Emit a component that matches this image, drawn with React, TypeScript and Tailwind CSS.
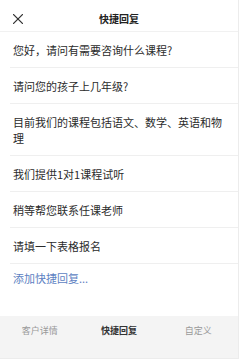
import React from "react";

const items: string[] = [
  "您好，请问有需要咨询什么课程?",
  "请问您的孩子上几年级?",
  "目前我们的课程包括语文、数学、英语和物理",
  "我们提供1对1课程试听",
  "稍等帮您联系任课老师",
  "请填一下表格报名",
];

export default function App() {
  return (
    <div
      className="w-[240px] h-[360px] bg-white overflow-hidden"
      style={{ fontFamily: '"Noto Sans CJK SC", "Noto Sans", sans-serif' }}
    >
      <div className="w-[239px] h-[359px] flex flex-col border-r border-b border-[#ececec]">
        <div className="h-[32px] shrink-0 grid grid-cols-[1fr_auto_1fr] items-center pt-[6px] border-b border-[#f1f1f1]">
          <div className="pl-[13px] flex items-center">
            <svg width="10" height="10" viewBox="0 0 10 10">
              <path d="M0.6 0.6 L9.4 9.4 M9.4 0.6 L0.6 9.4" stroke="#333" strokeWidth="1.3" strokeLinecap="round" />
            </svg>
          </div>
          <div className="text-[10px] leading-[12px] font-bold text-[#222]">快捷回复</div>
          <div />
        </div>
        <div className="flex-1 flex flex-col">
          {items.map((t) => (
            <div key={t} className="ml-[10px] pl-[3px] pr-[12px] pt-[10px] pb-[9px] border-b border-[#efefef]">
              <div className="text-[11px] leading-[16px] text-[#2b2b2b]">{t}</div>
            </div>
          ))}
          <div className="pl-[13px] pt-[6px] text-[11px] leading-[16px] text-[#5d7fc2]">添加快捷回复...</div>
        </div>
        <div className="h-[42px] shrink-0 bg-[#f4f4f4] grid grid-cols-3 pt-[9px]">
          <div className="text-center text-[9px] leading-[12px] text-[#999]">客户详情</div>
          <div className="text-center text-[9px] leading-[12px] font-bold text-[#333]">快捷回复</div>
          <div className="text-center text-[9px] leading-[12px] text-[#999]">自定义</div>
        </div>
      </div>
    </div>
  );
}
